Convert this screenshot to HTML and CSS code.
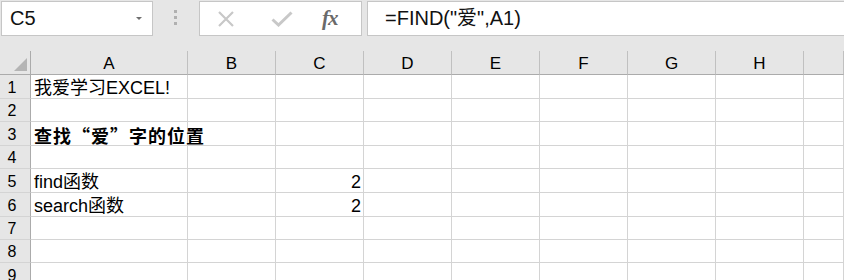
FILE: index.html
```html
<!DOCTYPE html>
<html lang="zh-CN">
<head>
  <meta charset="UTF-8">
  <title>查找函数</title>
  <link rel="stylesheet" href="styles.css">
</head>
<body>
  <div class="toolbar">
    <div class="namebox">
      <span class="ref">C5</span>
      <span class="caret"></span>
    </div>
    <div class="grip"><i></i><i></i><i></i></div>
    <div class="fxbox">
      <svg class="icon" width="18" height="16" viewBox="0 0 18 16"><path d="M2 1 L16 15 M16 1 L2 15" stroke="#c8c8c8" stroke-width="2.2" fill="none"/></svg>
      <svg class="icon" width="22" height="16" viewBox="0 0 22 16"><path d="M1.5 8.5 L7.5 14 L20.5 1.5" stroke="#c8c8c8" stroke-width="3" fill="none"/></svg>
      <span class="fx">fx</span>
    </div>
    <div class="formula">=FIND("爱",A1)</div>
  </div>

  <div class="sheet">
    <div class="corner"><span class="tri"></span></div>
    <div class="colhead">A</div>
    <div class="colhead">B</div>
    <div class="colhead">C</div>
    <div class="colhead">D</div>
    <div class="colhead">E</div>
    <div class="colhead">F</div>
    <div class="colhead">G</div>
    <div class="colhead">H</div>
    <div class="colhead"></div>

    <div class="rowhead">1</div>
    <div class="cell">我爱学习EXCEL!</div>
    <div class="cell"></div><div class="cell"></div><div class="cell"></div><div class="cell"></div>
    <div class="cell"></div><div class="cell"></div><div class="cell"></div><div class="cell"></div>

    <div class="rowhead">2</div>
    <div class="cell"></div><div class="cell"></div><div class="cell"></div><div class="cell"></div><div class="cell"></div>
    <div class="cell"></div><div class="cell"></div><div class="cell"></div><div class="cell"></div>

    <div class="rowhead">3</div>
    <div class="cell bold">查找“爱”字的位置</div>
    <div class="cell"></div><div class="cell"></div><div class="cell"></div><div class="cell"></div>
    <div class="cell"></div><div class="cell"></div><div class="cell"></div><div class="cell"></div>

    <div class="rowhead">4</div>
    <div class="cell"></div><div class="cell"></div><div class="cell"></div><div class="cell"></div><div class="cell"></div>
    <div class="cell"></div><div class="cell"></div><div class="cell"></div><div class="cell"></div>

    <div class="rowhead">5</div>
    <div class="cell">find函数</div>
    <div class="cell"></div>
    <div class="cell num">2</div>
    <div class="cell"></div><div class="cell"></div><div class="cell"></div><div class="cell"></div><div class="cell"></div><div class="cell"></div>

    <div class="rowhead">6</div>
    <div class="cell">search函数</div>
    <div class="cell"></div>
    <div class="cell num">2</div>
    <div class="cell"></div><div class="cell"></div><div class="cell"></div><div class="cell"></div><div class="cell"></div><div class="cell"></div>

    <div class="rowhead">7</div>
    <div class="cell"></div><div class="cell"></div><div class="cell"></div><div class="cell"></div><div class="cell"></div>
    <div class="cell"></div><div class="cell"></div><div class="cell"></div><div class="cell"></div>

    <div class="rowhead">8</div>
    <div class="cell"></div><div class="cell"></div><div class="cell"></div><div class="cell"></div><div class="cell"></div>
    <div class="cell"></div><div class="cell"></div><div class="cell"></div><div class="cell"></div>

    <div class="rowhead">9</div>
    <div class="cell"></div><div class="cell"></div><div class="cell"></div><div class="cell"></div><div class="cell"></div>
    <div class="cell"></div><div class="cell"></div><div class="cell"></div><div class="cell"></div>
  </div>
</body>
</html>
```

FILE: styles.css
```css
* {
  box-sizing: border-box;
}

body {
  margin: 0;
  background-color: #e6e6e6;
  font-family: "Liberation Sans", "Noto Sans CJK SC", sans-serif;
  color: #000;
  overflow: hidden;
}

.toolbar {
  display: flex;
  height: 51px;
  padding-top: 1px;
}

.namebox {
  display: flex;
  align-items: center;
  justify-content: space-between;
  width: 152px;
  height: 35px;
  margin-left: 1px;
  padding: 0 10px 0 8px;
  background: #fff;
  border: 1px solid #c6c6c6;
}

.ref {
  font-size: 20px;
  color: #111;
}

.caret {
  width: 0;
  height: 0;
  border-left: 3px solid transparent;
  border-right: 3px solid transparent;
  border-top: 3px solid #6f6f6f;
}

.grip {
  display: flex;
  flex-direction: column;
  gap: 3px;
  width: 46px;
  padding: 9px 0 0 21px;
}

.grip i {
  display: block;
  width: 3px;
  height: 3px;
  background: #b0b0b0;
}

.fxbox {
  display: flex;
  align-items: center;
  width: 163px;
  height: 35px;
  padding-left: 17px;
  background: #fff;
  border: 1px solid #c6c6c6;
}

.icon {
  margin-right: 36px;
}

.icon + .icon {
  margin-right: 29px;
}

.fx {
  font-family: "Liberation Serif", serif;
  font-style: italic;
  font-weight: bold;
  font-size: 21px;
  color: #6a6a6a;
  letter-spacing: -1px;
}

.formula {
  flex: 1;
  height: 35px;
  margin-left: 5px;
  padding-left: 17px;
  line-height: 33px;
  font-size: 20px;
  color: #111;
  background: #fff;
  border: 1px solid #c6c6c6;
  border-right: none;
}

.sheet {
  display: grid;
  grid-template-columns: 31px 157px 88px 88px 88px 88px 88px 88px 88px 1fr;
  grid-template-rows: 24px 24px 23px 24px 23px 24px 24px 23px 23px 24px;
  background: #fff;
}

.corner,
.colhead,
.rowhead {
  background: #e6e6e6;
}

.corner {
  position: relative;
  border-right: 1px solid #ababab;
  border-bottom: 1px solid #ababab;
}

.tri {
  position: absolute;
  right: 3px;
  bottom: 3px;
  width: 0;
  height: 0;
  border-left: 13px solid transparent;
  border-bottom: 13px solid #b4b4b4;
}

.colhead {
  display: flex;
  align-items: center;
  justify-content: center;
  padding-top: 3px;
  font-size: 17px;
  border-bottom: 1px solid #ababab;
  border-right: 1px solid #c0c0c0;
}

.colhead:last-child {
  border-right: none;
}

.rowhead {
  display: flex;
  align-items: flex-end;
  justify-content: center;
  padding-right: 6px;
  font-size: 16px;
  line-height: 20px;
  border-right: 1px solid #ababab;
  border-bottom: 1px solid #d4d4d4;
}

.cell {
  display: flex;
  align-items: flex-end;
  padding: 0 2px 0 3px;
  font-size: 18px;
  line-height: 20px;
  white-space: nowrap;
  border-right: 1px solid #d4d4d4;
  border-bottom: 1px solid #d4d4d4;
}

.cell.bold {
  font-family: "Noto Sans CJK SC", sans-serif;
  font-weight: bold;
  letter-spacing: 1px;
}

.cell.num {
  justify-content: flex-end;
}
```
